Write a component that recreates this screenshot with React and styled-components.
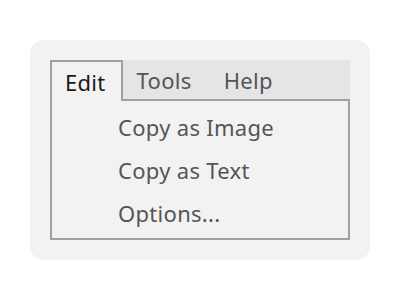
import React, { useState } from 'react';
import styled, { createGlobalStyle } from 'styled-components';

const GlobalStyle = createGlobalStyle`
  body {
    margin: 0;
    background: #ffffff;
    font-family: "Noto Sans", "Open Sans", sans-serif;
  }
`;

const menus = ['Edit', 'Tools', 'Help'];
const items = ['Copy as Image', 'Copy as Text', 'Options...'];

const App = () => {
  const [activeMenu, setActiveMenu] = useState('Edit');

  return (
    <>
      <GlobalStyle />
      <Card>
        <Frame>
          <MenuBar>
            {menus.map((menu) => (
              <MenuTab
                key={menu}
                $active={activeMenu === menu}
                onClick={() => setActiveMenu(menu)}
              >
                {menu}
              </MenuTab>
            ))}
          </MenuBar>
          <Panel>
            {items.map((item) => (
              <Item key={item}>{item}</Item>
            ))}
          </Panel>
        </Frame>
      </Card>
    </>
  );
};

const Card = styled.div`
  width: 340px;
  height: 220px;
  box-sizing: border-box;
  margin: 40px auto 0;
  padding: 20px;
  background: #f2f2f2;
  border-radius: 14px;
`;

const Frame = styled.div`
  display: flex;
  flex-direction: column;
  width: 300px;
`;

const MenuBar = styled.div`
  display: flex;
  height: 39px;
  background: #e5e5e5;
  border-bottom: 2px solid #a0a0a0;
`;

const MenuTab = styled.div`
  display: flex;
  align-items: center;
  padding: ${(p) => (p.$active ? '0 15px 0 13px' : '0 18px 0 14px')};
  font-size: 22px;
  letter-spacing: 0.3px;
  color: ${(p) => (p.$active ? '#1a1a1a' : '#555555')};
  cursor: default;
  box-sizing: border-box;
  ${(p) =>
    p.$active &&
    `
    background: #f2f2f2;
    border: 2px solid #a0a0a0;
    border-bottom: none;
    margin-bottom: -2px;
  `}
`;

const Panel = styled.div`
  display: flex;
  flex-direction: column;
  height: 139px;
  box-sizing: border-box;
  padding: 4px 0 4px 66px;
  border: 2px solid #a0a0a0;
  border-top: none;
`;

const Item = styled.div`
  display: flex;
  align-items: center;
  height: 43px;
  font-size: 22px;
  letter-spacing: 0.3px;
  color: #555555;
`;

export default App;
